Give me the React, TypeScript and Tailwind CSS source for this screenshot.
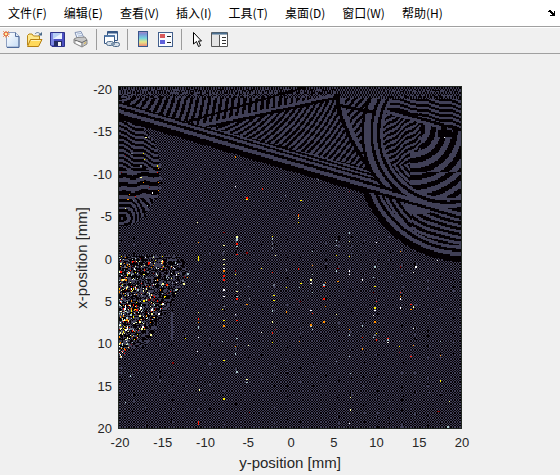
import React from 'react'

const PLOT_W = 344
const PLOT_H = 343
const CELLS = 267

const menus = ['文件(F)', '编辑(E)', '查看(V)', '插入(I)', '工具(T)', '桌面(D)', '窗口(W)', '帮助(H)']
const ticks = [-20, -15, -10, -5, 0, 5, 10, 15, 20]

const W = '#ffffff'
const C = '#ffff9c'
const Y = '#ffee00'
const O = '#ff8c00'
const R = '#ff1400'
const D = '#7a0000'
const B = '#a9c8cc'
const G = '#6d7485'

// single hot samples: x, y, width, height, colour
const spots: [number, number, number, number, string][] = [
  [27, 51, 2, 1, C], [30, 51, 1, 1, G], [13, 67, 2, 1, G], [7, 69, 1, 1, D], [25, 67, 1, 1, Y], [26, 73, 1, 1, Y],
  [22, 79, 2, 2, G], [39, 79, 1, 2, Y], [40, 82, 1, 1, O], [39, 86, 1, 1, R], [3, 86, 1, 1, D], [22, 91, 2, 1, C],
  [25, 96, 1, 1, O], [40, 96, 1, 1, O], [31, 101, 1, 1, D], [40, 104, 1, 1, O], [34, 106, 1, 2, W], [11, 108, 1, 1, O],
  [17, 110, 1, 1, R], [9, 113, 2, 1, O], [15, 114, 1, 1, G], [29, 119, 1, 1, B], [7, 122, 1, 1, C], [81, 91, 1, 1, G],
  [117, 70, 1, 2, O], [117, 100, 1, 1, W], [144, 102, 1, 2, R], [128, 111, 2, 2, R], [128, 113, 2, 1, Y], [182, 114, 2, 1, Y],
  [167, 109, 1, 1, G], [200, 93, 1, 2, G], [231, 105, 1, 1, D], [258, 156, 1, 1, W], [282, 165, 1, 1, O], [319, 174, 1, 1, W], [326, 51, 1, 1, W],
  [79, 136, 1, 1, C], [80, 142, 1, 1, G], [80, 156, 1, 1, O], [80, 170, 1, 5, Y], [80, 195, 1, 1, B], [80, 207, 1, 1, G],
  [80, 226, 1, 1, C], [80, 232, 1, 2, R], [80, 236, 1, 1, O], [80, 240, 1, 3, B], [80, 251, 1, 1, W], [79, 265, 1, 1, W],
  [81, 303, 1, 2, C], [80, 335, 1, 4, R], [54, 276, 2, 2, D], [12, 289, 1, 2, B], [7, 316, 1, 1, B], [32, 248, 2, 2, C], [67, 252, 1, 1, Y],
  [105, 146, 2, 1, D], [105, 159, 2, 1, C], [105, 165, 2, 1, G], [105, 173, 2, 1, C], [105, 178, 2, 1, C], [105, 182, 2, 1, W],
  [105, 184, 2, 2, O], [105, 189, 2, 2, R], [105, 193, 2, 2, R], [105, 203, 2, 2, W], [105, 210, 2, 1, W], [105, 220, 2, 1, G],
  [104, 223, 1, 1, Y], [105, 234, 2, 1, Y], [105, 239, 2, 2, O], [104, 255, 1, 1, B], [105, 274, 2, 1, Y], [105, 312, 2, 2, Y],
  [118, 150, 2, 2, C], [118, 152, 2, 3, B], [118, 157, 2, 2, R], [118, 160, 2, 1, B], [118, 168, 2, 1, R], [117, 184, 1, 2, D],
  [117, 188, 1, 1, Y], [118, 197, 2, 1, G], [118, 205, 2, 1, C], [118, 210, 2, 1, B], [118, 212, 2, 2, R], [117, 228, 1, 1, W],
  [118, 234, 2, 1, R], [118, 252, 2, 1, B], [117, 260, 1, 1, O], [117, 267, 1, 2, B], [118, 285, 2, 2, B],
  [128, 166, 2, 2, D], [130, 200, 1, 1, G], [131, 212, 1, 2, G], [128, 218, 2, 1, O], [130, 259, 1, 1, C], [128, 293, 2, 1, C], [128, 296, 2, 1, B],
  [131, 326, 1, 1, D], [143, 182, 1, 1, Y], [143, 246, 1, 1, W], [154, 150, 1, 1, Y], [154, 152, 1, 2, B], [154, 157, 1, 2, G],
  [154, 161, 1, 2, G], [157, 169, 1, 1, C], [154, 186, 1, 1, R], [155, 198, 2, 2, G], [155, 209, 2, 1, Y], [155, 214, 2, 1, Y],
  [154, 219, 1, 1, G], [154, 224, 1, 2, B], [154, 235, 1, 2, C], [154, 246, 1, 2, R], [157, 243, 1, 1, D], [154, 256, 1, 1, Y],
  [168, 183, 1, 2, G], [168, 201, 1, 1, Y], [168, 225, 1, 2, O], [180, 128, 1, 1, R], [180, 129, 1, 2, O], [180, 132, 1, 1, C],
  [180, 136, 1, 1, Y], [180, 182, 1, 2, R], [182, 197, 2, 1, Y], [181, 201, 1, 1, B], [181, 215, 2, 1, D], [181, 255, 1, 1, O],
  [194, 165, 1, 1, B], [194, 179, 1, 1, O], [194, 188, 1, 1, B], [192, 193, 2, 2, C], [192, 197, 2, 1, W], [194, 206, 1, 1, B],
  [192, 224, 2, 1, W], [194, 227, 1, 1, R], [192, 238, 2, 2, O], [192, 240, 2, 1, B], [194, 243, 1, 1, B],
  [205, 198, 2, 2, B], [205, 200, 2, 1, R], [207, 196, 1, 1, O], [205, 212, 2, 2, R], [207, 220, 1, 1, O], [205, 235, 2, 2, O],
  [218, 154, 1, 1, B], [218, 159, 1, 1, B], [218, 169, 1, 1, Y], [219, 182, 2, 1, D], [218, 184, 1, 2, B], [219, 195, 2, 1, O],
  [218, 228, 1, 1, C], [218, 275, 1, 1, G], [231, 146, 1, 2, B], [231, 155, 1, 1, C], [231, 170, 1, 1, Y], [231, 184, 1, 2, W],
  [231, 188, 1, 1, W], [231, 243, 1, 1, O], [231, 248, 1, 2, B], [231, 270, 1, 1, B], [232, 287, 1, 1, B], [232, 311, 1, 1, C],
  [232, 323, 1, 2, C], [231, 337, 1, 1, W], [244, 193, 1, 2, W], [244, 239, 1, 2, B], [244, 251, 1, 1, R], [244, 262, 1, 2, O],
  [256, 180, 2, 2, B], [255, 191, 1, 1, B], [256, 200, 2, 1, Y], [255, 206, 1, 1, D], [258, 215, 1, 1, R], [256, 221, 2, 2, Y],
  [256, 224, 2, 1, W], [255, 229, 1, 1, W], [256, 235, 2, 2, O], [258, 247, 1, 1, Y], [256, 248, 2, 2, G], [258, 253, 1, 2, R],
  [255, 251, 1, 1, B], [269, 252, 2, 1, R], [269, 253, 2, 2, B], [269, 256, 2, 1, W], [282, 180, 1, 2, D], [282, 206, 1, 1, R],
  [282, 210, 1, 1, O], [282, 212, 1, 2, W], [282, 221, 1, 2, W], [281, 260, 1, 1, Y], [281, 266, 1, 1, D], [281, 255, 1, 1, G],
  [292, 218, 2, 1, R], [295, 220, 1, 2, C], [292, 223, 2, 1, O], [295, 242, 1, 1, W], [295, 259, 1, 1, O], [292, 270, 2, 1, R],
  [295, 186, 1, 1, W], [297, 180, 2, 2, W], [322, 255, 1, 1, B], [322, 269, 1, 1, O], [322, 294, 1, 2, Y], [331, 315, 1, 1, C],
  [319, 325, 3, 1, D], [329, 340, 2, 2, B],
]

// repeatable noise in 0..1
function noise(a: number, b: number) {
  const n = Math.sin(a * 127.1 + b * 311.7) * 43758.5453
  return n - Math.floor(n)
}

function wave(t: number, period: number) {
  return Math.sin((t * 2 * Math.PI) / period) > 0
}

// y of the line a-b at x
function lineAt(x: number, ax: number, ay: number, bx: number, by: number) {
  return ay + ((x - ax) * (by - ay)) / (bx - ax)
}

function bands(d: number) {
  if (d < 6) return false
  if (d < 10) return true
  if (d < 13) return false
  if (d < 16) return true
  if (d < 18) return false
  return wave(d - 18, 4)
}

function isLit(i: number, j: number) {
  const x = (i + 0.5) * (PLOT_W / CELLS)
  const y = (j + 0.5) * (PLOT_H / CELLS)
  const checker = (i + j) % 2 === 0
  const depth = 33 + 0.302 * x - y
  const outer = Math.hypot(x - 347, y - 66)
  const ring = Math.hypot(x - 330, y - 47)

  // lens under the ridge on the right
  if (x > 243 && depth < 3 && outer < 110) {
    const e = 110 - outer
    if (e < 6) return false
    if (e < 10) return true
    if (e < 13) return false
    if (e < 16) return true
    if (x > 285 && Math.hypot((x - 301) / 15, (y - 121) / 8) < 1) return true
    if (Math.hypot((x - 327) / 5, (y - 121) / 3) < 1) return false
    if (x > 294) return wave(e + Math.sin(x / 9), 5.8)
    return wave(e * 0.8 + (x - 260) * 0.12, 5)
  }

  // everything below the ridge
  if (depth < 0) {
    if (x < 44 && y < 145) {
      const edge = Math.hypot(x, (y - 87) * 0.78)
      if (edge < 41 + noise(j, 4) * 3) {
        if (y > 112) return wave(Math.hypot(x - 4, y - 132) + Math.sin(x / 3), 5)
        const bend = y < 85 ? -x * 0.4 : x * 0.08
        const period = y > 82 ? 8.5 : 5.2
        return wave(y + bend + Math.sin(x / 3.3) * 1.3, period)
      }
    }
    if (x < 76 && y > 170 && y < 262) {
      const n = noise(i >> 1, j)
      const inside = x < 72 - Math.abs(y - 186) * 0.6
      if (inside && n < 0.32) return false
      if (inside && n > 0.78) return true
    }
    if (x > 53 && x < 56 && y > 215 && y < 255 && noise(2, j >> 2) > 0.4) return true
    // slow spots along the scan columns
    const near = Math.abs(((x - 2) % 12.8) - 1)
    if (near < 1 && y > 150 && noise(Math.floor(x / 12.8), j) > 0.9) return noise(i, j) > 0.5
    return checker
  }

  // the disc on the right
  if (ring < 78 && x > 250) {
    const e = 78 - ring
    if (depth < 10) return bands(depth)
    if (y < 13) return noise(i, j >> 1) > 0.72 ? !checker : (i + (j >> 1)) % 2 === 0
    if (e < 3) return false
    if (e < 7) return true
    if (e < 10) return false
    if (e < 13) return true
    const slash = y - lineAt(x, 265, 20, 344, 43)
    if (slash > 0 && slash < 3) return false
    if (slash > 3 && slash < 6 && x < 320) return true
    if (slash < 0) return wave(y * 1.1 - x * 0.24 + Math.sin(x / 4), 5.6)
    if (x > 320 && x < 334 && y > 44 && y < 52) return false
    const r = Math.hypot(x - 294, y - 42)
    if (x > 303 || (x > 292 && y > 66)) return wave(r - 2, y > 86 ? 10 : 11)
    if (y > 78) return wave(e, 4.8)
    return wave(x * 0.6 + y * 0.78 + Math.sin(x / 3), 4.6)
  }

  // left limb crossing the ridge
  const limb = 217 + Math.pow(Math.max(y - 10, 0), 1.6) * 0.034
  if (y > 8 && x > limb && x < limb + 4 && depth > 10) return false
  if (x > limb && depth > 15) {
    if (y < 12) return (i + (j >> 1)) % 2 === 0
    const tail = y - lineAt(x, 218, 17, 262, 26)
    if (tail > 0 && tail < 3) return false
    if (ring < 84) return true
    if (ring < 87) return false
    if (y > 66) return wave(y - x * 0.35, 4.4)
    if (x - limb < 9) return true
    return wave(x * 0.7 + y * 0.6, 5)
  }

  if (depth < 18 + Math.max(0, (x - 60) * 0.04)) return bands(depth)

  const upper = y - lineAt(x, 58, 38, 180, 2)
  const lower = y - lineAt(x, 75, 43, 228, 8)
  if (x > 52 && upper > 0 && upper < 2.2) return false
  if (x > 70 && lower > 0 && lower < 3) return false
  if (x > 70 && lower > -3 && lower < 0) return true
  if (y < 12) {
    if (noise(i, j) > 0.8) return !checker
    return y < 7 ? (i + Math.floor(j / 3)) % 2 === 0 : checker
  }
  if (lower > 0 && x > 70) return wave(Math.hypot(x - 60, (y + 45) * 1.1), 5)
  if (x < 24) return wave(Math.hypot(x, y + 4), 6)
  return wave(Math.hypot(x - 8, (y + 12) * 0.72), 5.8)
}

// samples are snapped to whole units so the columns beat like a resampled image
function buildSurface() {
  const sx = PLOT_W / CELLS
  const sy = PLOT_H / CELLS
  let d = ''
  for (let j = 0; j < CELLS; j++) {
    const top = Math.round(j * sy)
    const h = Math.round((j + 1) * sy) - top
    let start = -1
    for (let i = 0; i <= CELLS; i++) {
      const lit = i < CELLS && isLit(i, j)
      if (lit && start < 0) start = i
      if (!lit && start >= 0) {
        const left = Math.round(start * sx)
        const w = Math.round(i * sx) - left
        d += `M${left} ${top}h${w}v${h}h-${w}z`
        start = -1
      }
    }
  }
  return d
}

// dense burst of samples on the left side
function buildBurst() {
  const colors = [W, C, C, B, B, G, Y, O, R, D, W, G]
  const list: [number, number, number, number, string][] = []
  for (let k = 0; k < 1000; k++) {
    const y = 170 + Math.floor(noise(k, 1) * 101)
    const limit = y < 188 ? 62 + (y - 170) * 0.6 : 74 - (y - 188) * 0.85
    const x = Math.floor(Math.pow(noise(k, 2), 1.35) * limit)
    if (x < 0 || (y < 174 && noise(k, 8) > 0.5)) continue
    if (noise(k, 3) < (x / 74) * 0.6 + 0.2) continue
    // the lower tip gets narrow, so keep it thinner too
    if (y > 245 && noise(k, 9) > 0.45) continue
    const size = noise(k, 5) > 0.93 ? 2 : 1
    list.push([x, y, size, noise(k, 6) > 0.75 ? 2 : size, colors[Math.floor(noise(k, 7) * colors.length)]])
  }
  return list
}

const surface = buildSurface()
const burst = buildBurst()

function Plot() {
  return (
    <svg viewBox="0 0 344 343" className="block w-full h-auto bg-black" shapeRendering="crispEdges" role="img" aria-label="x-position / y-position">
      <rect width="344" height="343" fill="#040003" />
      <path d={surface} fill="#403f56" />
      {burst.concat(spots).map(([x, y, w, h, fill], n) => (
        <rect key={n} x={x} y={y} width={w} height={h} fill={fill} />
      ))}
      <rect x="0.5" y="0.5" width="343" height="342" fill="none" stroke="#202620" />
    </svg>
  )
}

function ToolButton({ label, children }: { label: string; children: React.ReactNode }) {
  return (
    <button type="button" aria-label={label} className="flex h-6 w-[23px] items-center justify-center">
      <svg width="17" height="17" viewBox="0 0 17 17">{children}</svg>
    </button>
  )
}

function Separator() {
  return (
    <div className="flex h-[21px] w-2 justify-center">
      <div className="w-px bg-[#9c9c9c]"></div>
    </div>
  )
}

function Toolbar() {
  return (
    <div className="flex h-[27px] items-center border-b border-[#a0a0a0] border-t border-t-white bg-[#f0f0f0] pb-0.5">
      <ToolButton label="新建">
        <defs>
          <linearGradient id="paper" x2="1" y2="1"><stop stopColor="#fff" /><stop offset="1" stopColor="#c5dcf5" /></linearGradient>
          <linearGradient id="jet" x2="0" y2="1"><stop stopColor="#b48bb8" /><stop offset=".15" stopColor="#7c8fd8" /><stop offset=".45" stopColor="#74d5dc" /><stop offset=".7" stopColor="#e7e786" /><stop offset="1" stopColor="#ed8177" /></linearGradient>
        </defs>
        <path d="M3.500 1.500H12.500L16 5V16H3.500Z" fill="url(#paper)" stroke="#8d9fc0" />
        <path d="M16 5.500V16.500H4" fill="none" stroke="#4d6a9b" />
        <path d="M12.500 1.500V5.500H16" fill="#dbe9f8" stroke="#57719f" />
        <path d="M0 0L6 6M6 0L0 6M3 0V7M0 3H7" stroke="#e9a268" />
        <circle cx="3" cy="3" r="2" fill="#fff0a0" stroke="#df522d" />
      </ToolButton>
      <ToolButton label="打开">
        <path d="M1.500 14V4.500L3 3H6L7.500 5H13.500V8" fill="#ffe88b" stroke="#b88718" />
        <path d="M1.500 15.500L4.500 8.500H16L12.500 15.500Z" fill="#ffd95a" stroke="#b57f12" />
        <path d="M5 9.500H14.500" stroke="#fff4b8" />
        <path d="M9 3C10.500 1 13 1 14.500 3.500" fill="none" stroke="#5c7898" />
        <path d="M12 4.500H16V1Z" fill="#496888" />
      </ToolButton>
      <ToolButton label="保存">
        <path d="M1.500 1.500H15.500V15.500H3L1.500 14Z" fill="#4c50c2" stroke="#2d3289" />
        <path d="M2 2H5V14H2Z" fill="#7d88e3" />
        <path d="M4 2H13V8H4Z" fill="#e9f2ff" />
        <path d="M4 2H13L4 8Z" fill="#b6d0f5" />
        <path d="M5 10H13V15H5Z" fill="#252d60" />
        <path d="M9 11H12V15H9Z" fill="#f4f4f4" />
      </ToolButton>
      <ToolButton label="打印">
        <path d="M5 7L3 1.500L9 .5L12 7Z" fill="#eef5ff" stroke="#8292b3" />
        <path d="M5 3L9 2.500M6 5L10 4.500" stroke="#a9b9d2" />
        <path d="M2 8L5 6.500L13 6L15 9V13L10 16L2 12Z" fill="#c7c7c7" stroke="#8a8a8a" />
        <path d="M2.500 9L10 11.500L15 9" fill="none" stroke="#666" />
        <path d="M4 11L9 13.500" stroke="#fff" strokeWidth="2" />
        <path d="M10 12V16" stroke="#888" />
        <path d="M12 12.500L14 11.500" stroke="#e4b83d" />
      </ToolButton>
      <Separator />
      <ToolButton label="链接绘图">
        <path d="M4.500 .5H14.500V9.500H4.500Z" fill="#eef6fd" stroke="#365784" />
        <path d="M4.500 1.500H14.500" stroke="#365784" strokeWidth="2" />
        <path d="M1.500 4.500H11.500V12.500H1.500Z" fill="#fff" stroke="#365784" />
        <path d="M1.500 5H11.500" stroke="#5279a8" strokeWidth="2" />
        <rect x="3.500" y="10.500" width="7" height="4" rx="2" fill="#d5dfe9" stroke="#52708f" />
        <rect x="9.500" y="11.500" width="7" height="4" rx="2" fill="#d5dfe9" stroke="#4a6787" />
        <path d="M8 13H12" stroke="#8298af" strokeWidth="2" />
      </ToolButton>
      <Separator />
      <ToolButton label="插入颜色栏">
        <rect x="4.500" y=".5" width="9" height="15" fill="url(#jet)" stroke="#38568a" />
      </ToolButton>
      <ToolButton label="插入图例">
        <rect x="1.500" y="1.500" width="14" height="14" fill="#f8fbff" stroke="#425f8c" />
        <rect x="3" y="3" width="5" height="4" fill="#d95a5c" />
        <rect x="3" y="9" width="5" height="4" fill="#5e60da" />
        <path d="M10 5.500H14M10 11.500H14" stroke="#222" />
      </ToolButton>
      <Separator />
      <ToolButton label="编辑绘图">
        <path d="M5.500 1.500V13L8.500 10.500L10.500 15.500L12.500 14.500L10.500 10H13.500Z" fill="#fff" stroke="#000" />
      </ToolButton>
      <ToolButton label="打开属性检查器">
        <path d="M.5 1.500H16.500V15.500H.5Z" fill="#e4e4e4" stroke="#555" />
        <path d="M1 2.500H16" stroke="#4c7091" strokeWidth="2" />
        <path d="M9 4H16V15H9Z" fill="#fff" />
        <path d="M8.500 4V15" stroke="#555" />
        <path d="M11 6.500H15M11 9.500H15M11 12.500H15" stroke="#333" />
      </ToolButton>
    </div>
  )
}

export default function App() {
  return (
    <div className="min-h-screen bg-[#f0f0f0] font-['Liberation_Sans','Noto_Sans_CJK_SC',sans-serif] text-[#262626]">
      <nav className="flex h-[27px] items-center border-b border-[#a0a0a0] bg-white pl-2 pr-1 text-xs text-black">
        <div className="flex flex-1 gap-[17px] whitespace-nowrap">
          {menus.map((name) => (
            <button key={name} type="button" className="font-['Noto_Sans_CJK_SC',sans-serif]">{name}</button>
          ))}
        </div>
        <button type="button" aria-label="停靠">
          <svg width="8" height="7" viewBox="0 0 8 7" shapeRendering="crispEdges">
            <path d="M0 1H1V0H3V1H4V2H5V3H6V1H7V6H2V5H4V4H3V3H2V2H0Z" fill="#000" />
          </svg>
        </button>
      </nav>
      <Toolbar />
      <main className="pt-8 pr-[98px] pl-[72px]">
        <div className="flex">
          <div className="flex w-5 items-center justify-center text-[15px] leading-5">
            <span className="rotate-180 whitespace-nowrap [writing-mode:vertical-rl]">x-position [mm]</span>
          </div>
          <div className="-mt-1 -mb-2 flex w-[26px] flex-col justify-between pr-1.5 text-right text-[13px] leading-4">
            {ticks.map((t) => <span key={t}>{t}</span>)}
          </div>
          <div className="min-w-0 flex-1">
            <Plot />
          </div>
        </div>
        <div className="mt-1.5 -mr-4 ml-8 flex justify-between text-[13px] leading-4">
          {ticks.map((t) => <span key={t} className="w-8 text-center">{t}</span>)}
        </div>
        <div className="ml-[46px] text-center text-[15px] leading-6">y-position [mm]</div>
      </main>
    </div>
  )
}
